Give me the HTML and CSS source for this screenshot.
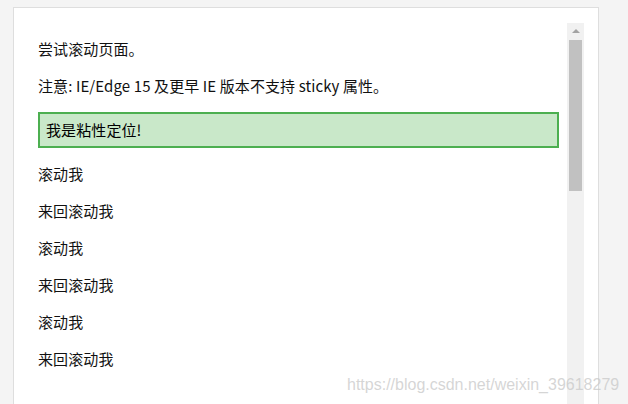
FILE: index.html
```html
<!DOCTYPE html>
<html>
<head>
<meta charset="utf-8">
<link rel="stylesheet" href="styles.css">
</head>
<body>
<div class="frame">
  <div class="viewport">
    <div class="content">
      <p>尝试滚动页面。</p>
      <p>注意: IE/Edge 15 及更早 IE 版本不支持 sticky 属性。</p>
      <div class="sticky">我是粘性定位!</div>
      <p>滚动我</p>
      <p>来回滚动我</p>
      <p>滚动我</p>
      <p>来回滚动我</p>
      <p>滚动我</p>
      <p>来回滚动我</p>
    </div>
    <div class="scrollbar">
      <div class="arrow"></div>
      <div class="thumb"></div>
    </div>
  </div>
</div>
<div class="watermark">https://blog.csdn.net/weixin_39618279</div>
</body>
</html>
```
FILE: styles.css
```css
html, body {
  margin: 0;
  padding: 0;
  height: 404px;
  overflow: hidden;
}
body {
  background: #f4f4f4;
  font-family: "Noto Sans CJK SC", "Noto Sans", sans-serif;
  position: relative;
}
.frame {
  margin: 7px 0 0 13px;
  width: 586px;
  height: 397px;
  border-top: 1px solid #dedede;
  border-left: 1px solid #dedede;
  border-right: 1px solid #dedede;
  background: #fff;
  padding: 15px 14px 0 16px;
  box-sizing: border-box;
}
.viewport {
  display: flex;
  height: 381px;
}
.content {
  flex: 1;
  padding: 15px 8px 0;
  font-size: 15px;
  color: #111;
  letter-spacing: 0.1px;
}
.content p {
  margin: 15px 0;
  line-height: 22px;
}
.content p:first-child {
  margin-top: 0;
}
.sticky {
  background: #c9e8c9;
  border: 2px solid #4caf50;
  padding: 5px 5px 5px 6px;
  line-height: 22px;
  color: #000;
}
.scrollbar {
  width: 17px;
  background: #f1f1f1;
  display: flex;
  flex-direction: column;
  align-items: center;
}
.arrow {
  width: 0;
  height: 0;
  margin-top: 6px;
  border-left: 4px solid transparent;
  border-right: 4px solid transparent;
  border-bottom: 4px solid #a3a3a3;
}
.thumb {
  margin-top: 7px;
  width: 13px;
  height: 151px;
  background: #c1c1c1;
}
.watermark {
  position: absolute;
  left: 347px;
  top: 376px;
  font-family: "Liberation Sans", Arial, sans-serif;
  font-size: 16px;
  color: rgba(200, 200, 200, 0.75);
}
```
